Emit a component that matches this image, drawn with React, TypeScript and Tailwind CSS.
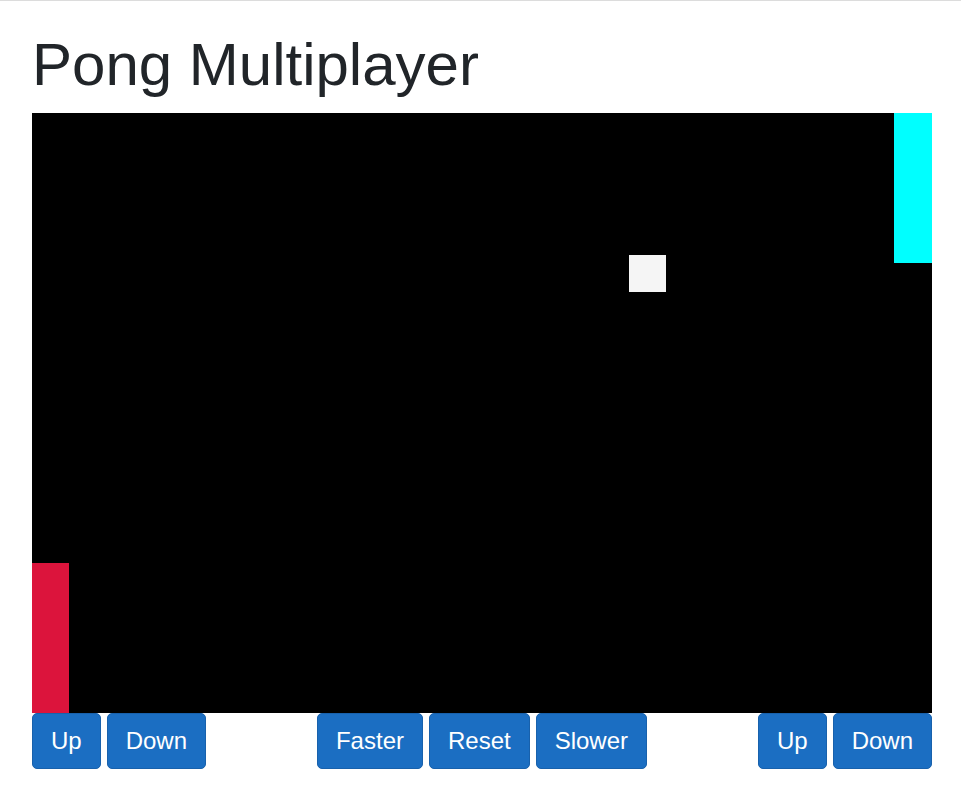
import React from "react";

const btn =
  "h-[56px] px-[18px] text-[24px] leading-[36px] text-white bg-[#1b6ec2] border border-[#1861ac] rounded-[5px]";

export default function App() {
  return (
    <div
      className="min-h-[807px] bg-white border-t border-[#dcdcdc] px-8 text-[#212529]"
      style={{ fontFamily: '"Liberation Sans", Arial, sans-serif' }}
    >
      <h1 className="pt-[28px] mb-[12px] text-[60px] leading-[72px] font-normal">
        Pong Multiplayer
      </h1>
      <div className="relative w-[900px] h-[600px] bg-black">
        <div className="absolute left-0 bottom-0 w-[37px] h-[150px] bg-[#dc143c]" />
        <div className="absolute right-0 top-0 w-[38px] h-[150px] bg-[#00ffff]" />
        <div className="absolute left-[597px] top-[142px] w-[37px] h-[37px] bg-[#f5f5f5]" />
      </div>
      <div className="flex w-[900px] justify-between">
        <div className="flex gap-[6px]">
          <button className={btn}>Up</button>
          <button className={btn}>Down</button>
        </div>
        <div className="flex gap-[6px]">
          <button className={btn}>Faster</button>
          <button className={btn}>Reset</button>
          <button className={btn}>Slower</button>
        </div>
        <div className="flex gap-[6px]">
          <button className={btn}>Up</button>
          <button className={btn}>Down</button>
        </div>
      </div>
    </div>
  );
}
